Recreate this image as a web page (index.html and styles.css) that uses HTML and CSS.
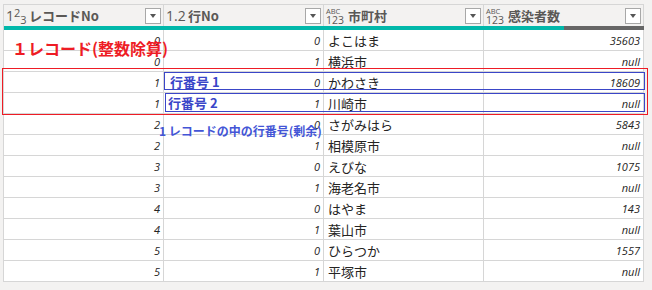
FILE: index.html
```html
<!DOCTYPE html>
<html lang="ja">
<head>
<meta charset="utf-8">
<link rel="stylesheet" href="styles.css">
</head>
<body>
<div class="grid">
  <div class="hcell">
    <span class="type t123">1<sup>2</sup><sub>3</sub></span>
    <span class="label">レコードNo</span>
    <span class="dd"><i></i></span>
  </div>
  <div class="hcell">
    <span class="type t12">1.2</span>
    <span class="label">行No</span>
    <span class="dd"><i></i></span>
  </div>
  <div class="hcell">
    <span class="type tabc"><b>ABC</b><b>123</b></span>
    <span class="label">市町村</span>
    <span class="dd"><i></i></span>
  </div>
  <div class="hcell">
    <span class="type tabc"><b>ABC</b><b>123</b></span>
    <span class="label">感染者数</span>
    <span class="dd"><i></i></span>
  </div>

  <div class="qbar"></div><div class="qbar"></div><div class="qbar"></div><div class="qbar partial"></div>

  <div class="c num">0</div><div class="c num">0</div><div class="c txt">よこはま</div><div class="c num">35603</div>
  <div class="c num">0</div><div class="c num">1</div><div class="c txt">横浜市</div><div class="c num">null</div>
  <div class="c num">1</div><div class="c num">0</div><div class="c txt">かわさき</div><div class="c num">18609</div>
  <div class="c num">1</div><div class="c num">1</div><div class="c txt">川崎市</div><div class="c num">null</div>
  <div class="c num">2</div><div class="c num">0</div><div class="c txt">さがみはら</div><div class="c num">5843</div>
  <div class="c num">2</div><div class="c num">1</div><div class="c txt">相模原市</div><div class="c num">null</div>
  <div class="c num">3</div><div class="c num">0</div><div class="c txt">えびな</div><div class="c num">1075</div>
  <div class="c num">3</div><div class="c num">1</div><div class="c txt">海老名市</div><div class="c num">null</div>
  <div class="c num">4</div><div class="c num">0</div><div class="c txt">はやま</div><div class="c num">143</div>
  <div class="c num">4</div><div class="c num">1</div><div class="c txt">葉山市</div><div class="c num">null</div>
  <div class="c num">5</div><div class="c num">0</div><div class="c txt">ひらつか</div><div class="c num">1557</div>
  <div class="c num">5</div><div class="c num">1</div><div class="c txt">平塚市</div><div class="c num">null</div>
</div>

<div class="note-red">１レコード(整数除算)</div>
<div class="box-red"></div>
<div class="box-blue b1"><span>行番号 1</span></div>
<div class="box-blue b2"><span>行番号 2</span></div>
<div class="note-blue">1 レコードの中の行番号(剰余)</div>
</body>
</html>
```

FILE: styles.css
```css
html, body {
  margin: 0;
  padding: 0;
}
body {
  width: 652px;
  height: 290px;
  background: #f3f2f1;
  position: relative;
  overflow: hidden;
  font-family: "Noto Sans CJK JP", "Open Sans", sans-serif;
}
.grid {
  position: absolute;
  left: 3px;
  top: 4px;
  display: grid;
  grid-template-columns: repeat(4, 160px);
  grid-auto-rows: 21px;
  grid-template-rows: 21px 4px;
  border-left: 1px solid #d6d6d6;
  border-top: 1px solid #d6d6d6;
}
.hcell {
  box-sizing: border-box;
  height: 21px;
  border-right: 1px solid #d6d6d6;
  background: #f3f2f1;
  display: flex;
  align-items: center;
  padding-left: 2px;
  color: #5a5856;
  position: relative;
}
.type {
  font-family: "Open Sans", "DejaVu Sans", sans-serif;
  font-size: 13px;
  color: #5a5856;
  line-height: 1;
}
.t123 {
  width: 23px;
  white-space: nowrap;
  font-size: 14px;
}
.t123 sup {
  font-size: 11px;
  vertical-align: 4px;
}
.t123 sub {
  font-size: 11px;
  vertical-align: -3px;
}
.t12 {
  width: 22px;
  font-size: 14px;
}
.tabc {
  width: 22px;
  display: flex;
  flex-direction: column;
  align-items: flex-start;
}
.tabc b {
  font-weight: 400;
  display: block;
}
.tabc b:first-child {
  font-size: 7.5px;
  line-height: 8px;
}
.tabc b:last-child {
  font-size: 10.5px;
  line-height: 10px;
}
.label {
  font-size: 13px;
  font-weight: 600;
  color: #5a5856;
  flex: 1;
  white-space: nowrap;
}
.dd {
  box-sizing: border-box;
  width: 16px;
  height: 16px;
  margin-right: 2px;
  border: 1px solid #a8a8a8;
  background: #fff;
  display: flex;
  align-items: center;
  justify-content: center;
}
.dd i {
  width: 0;
  height: 0;
  border-left: 3.5px solid transparent;
  border-right: 3.5px solid transparent;
  border-top: 4px solid #555;
}
.qbar {
  height: 4px;
  background: #01b8aa;
}
.qbar.partial {
  background: linear-gradient(to right, #01b8aa 0, #01b8aa 80px, #666666 80px);
}
.c {
  box-sizing: border-box;
  height: 21px;
  background: #fff;
  border-right: 1px solid #d6d6d6;
  border-bottom: 1px solid #d6d6d6;
  display: flex;
  align-items: center;
  white-space: nowrap;
}
.num {
  justify-content: flex-end;
  padding-right: 3px;
  font-family: "Open Sans", "DejaVu Sans", sans-serif;
  font-style: italic;
  font-size: 11px;
  color: #252423;
}
.txt {
  padding-left: 4px;
  font-size: 13px;
  color: #252423;
}
.note-red {
  position: absolute;
  left: 12px;
  top: 38px;
  font-size: 16px;
  font-weight: 700;
  color: #ee1c25;
  line-height: 20px;
  white-space: nowrap;
}
.box-red {
  position: absolute;
  left: 2px;
  top: 68px;
  width: 646px;
  height: 47px;
  border: 1px solid #ee1c25;
  box-sizing: border-box;
}
.box-blue {
  position: absolute;
  border: 1px solid #3a46c8;
  box-sizing: border-box;
  display: flex;
  align-items: center;
}
.box-blue span {
  font-size: 13px;
  font-weight: 700;
  color: #3a46c8;
  white-space: nowrap;
}
.b1 {
  left: 164px;
  top: 72px;
  width: 481px;
  height: 18px;
  padding-left: 5px;
}
.b2 {
  left: 165px;
  top: 93px;
  width: 480px;
  height: 19px;
  padding-left: 2px;
}
.note-blue {
  position: absolute;
  left: 159px;
  top: 123px;
  font-size: 12px;
  font-weight: 700;
  color: #4355d6;
  line-height: 16px;
  white-space: nowrap;
}
```
